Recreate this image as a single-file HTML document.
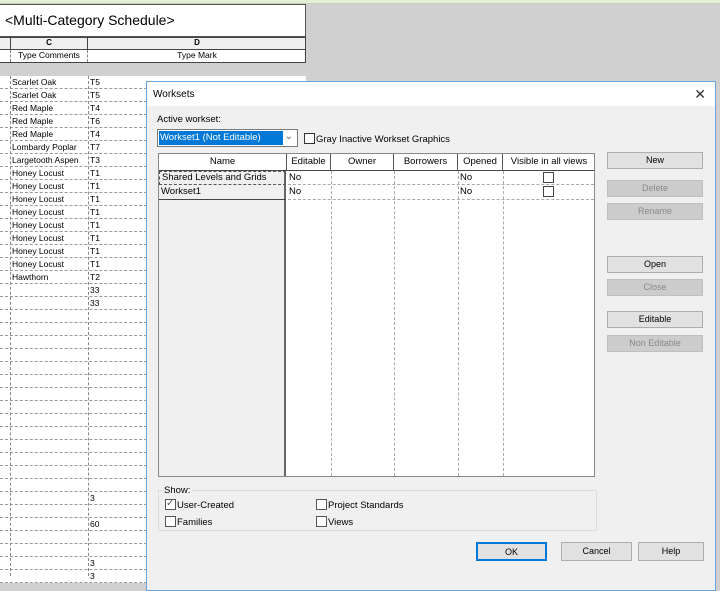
<!DOCTYPE html><html><head><style>
*{margin:0;padding:0;box-sizing:border-box}
body{width:720px;height:576px;overflow:hidden;background:#d0d0d0;font-family:"Liberation Sans",sans-serif;font-size:9px;color:#000;position:relative}
.a{position:absolute}
.row{position:absolute;left:0;width:306px;height:13px;border-bottom:1px dashed #999;background:#fff}
.row span{position:absolute;top:1px;font-size:8.5px}
.btn{position:absolute;left:607px;width:96px;height:17px;border:1px solid #adadad;background:#e1e1e1;text-align:center;line-height:15px;font-size:9px}
.dis{background:#ccc;border-color:#bfbfbf;color:#8a8a8a}
.cb{position:absolute;width:11px;height:11px;border:1px solid #333;background:#fff}
.th{position:absolute;top:0;height:17px;border-right:1px solid #555;text-align:center;line-height:16px;font-size:9.5px}
.vl{position:absolute;top:17px;bottom:0;border-left:1px dashed #aaa}
.dlg{font-size:9.5px}
</style></head><body>
<div class="a" style="left:0;top:0;width:720px;height:4px;background:#e6eed6;border-bottom:1px solid #c8d0b8"></div>
<div class="a" style="left:0;top:4px;width:306px;height:33px;background:#fff;border:1px solid #555;border-left:none;font-size:14px;padding:7px 0 0 5px">&lt;Multi-Category Schedule&gt;</div>
<div class="a" style="left:0;top:37px;width:306px;height:13px;background:#f0f0f0;border:1px solid #444;border-left:none;font-weight:bold;font-size:8px">
<div class="a" style="left:10px;width:78px;border-left:1px solid #444;border-right:1px solid #444;height:11px;text-align:center">C</div>
<div class="a" style="left:88px;width:218px;text-align:center">D</div></div>
<div class="a" style="left:0;top:50px;width:306px;height:13px;background:#fff;border:1px solid #444;border-top:none;border-left:none;font-size:8.5px">
<div class="a" style="left:10px;width:78px;border-left:1px dashed #888;border-right:1px dashed #888;height:12px;text-align:center">Type Comments</div>
<div class="a" style="left:88px;width:218px;text-align:center">Type Mark</div></div>
<div class="a" style="left:0;top:76px;width:306px;height:500px;background:#fff"></div>
<div id="rows"></div>
<div class="a" style="left:10px;top:76px;height:500px;border-left:1px dashed #888"></div>
<div class="a" style="left:88px;top:76px;height:500px;border-left:1px dashed #888"></div>

<div class="a dlg" style="left:146px;top:81px;width:570px;height:510px;background:#f0f0f0;border:1px solid #6aa6dc">
<div class="a" style="left:0;top:0;width:568px;height:24px;background:#fff;font-size:10px;padding:7px 0 0 6px">Worksets<span class="a" style="right:9px;top:4px;font-size:14px;color:#333">✕</span></div>
<div class="a" style="left:10px;top:32px">Active workset:</div>
<div class="a" style="left:10px;top:47px;width:141px;height:18px;background:#fff;border:1px solid #7a7a7a">
<div class="a" style="left:1px;top:1px;width:124px;height:14px;background:#0078d7;color:#fff;padding:1px 1px">Workset1 (Not Editable)</div>
<div class="a" style="right:4px;top:1px;color:#666;font-size:10px">⌄</div></div>
<div class="cb" style="left:157px;top:51px;border-color:#333"></div>
<div class="a" style="left:169px;top:52px">Gray Inactive Workset Graphics</div>
<div class="a" style="left:11px;top:71px;width:437px;height:324px;background:#fff;border:1px solid #888">
<div class="a" style="left:0;top:0;width:127px;height:322px;background:#f0f0f0;border-right:2px solid #666"></div>
<div class="a" style="left:0;top:0;width:435px;height:17px;border-bottom:1px solid #444;background:#fff"></div>
<div class="th" style="left:0;width:128px">Name</div>
<div class="th" style="left:128px;width:44px">Editable</div>
<div class="th" style="left:172px;width:63px">Owner</div>
<div class="th" style="left:235px;width:64px">Borrowers</div>
<div class="th" style="left:299px;width:45px">Opened</div>
<div class="th" style="left:344px;width:92px;border-right:none">Visible in all views</div>
<div class="vl" style="left:172px"></div><div class="vl" style="left:235px"></div><div class="vl" style="left:299px"></div><div class="vl" style="left:344px"></div>
<div class="a" style="left:0;top:17px;width:127px;height:14px;border:1px dashed #555;padding:0 2px">Shared Levels and Grids</div>
<div class="a" style="left:0;top:31px;width:127px;height:15px;border-bottom:1px solid #444;padding:1px 2px">Workset1</div>
<div class="a" style="left:129px;top:17px;width:306px;height:14px;border-bottom:1px dashed #aaa"></div>
<div class="a" style="left:129px;top:31px;width:306px;height:15px;border-bottom:1px dashed #aaa"></div>
<div class="a" style="left:130px;top:18px">No</div><div class="a" style="left:130px;top:32px">No</div>
<div class="a" style="left:301px;top:18px">No</div><div class="a" style="left:301px;top:32px">No</div>
<div class="cb" style="left:384px;top:18px;border-color:#444"></div><div class="cb" style="left:384px;top:32px;border-color:#444"></div>
</div>
<div class="a" style="left:11px;top:408px;width:439px;height:41px;border:1px solid #dcdcdc"></div>
<div class="a" style="left:15px;top:403px;background:#f0f0f0;padding:0 2px">Show:</div>
<div class="cb" style="left:18px;top:417px;border-color:#555;font-size:10px;line-height:8px;color:#555">✓</div>
<div class="a" style="left:30px;top:418px">User-Created</div>
<div class="cb" style="left:18px;top:434px;border-color:#555"></div><div class="a" style="left:30px;top:435px">Families</div>
<div class="cb" style="left:169px;top:417px;border-color:#555"></div><div class="a" style="left:181px;top:418px">Project Standards</div>
<div class="cb" style="left:169px;top:434px;border-color:#555"></div><div class="a" style="left:181px;top:435px">Views</div>
</div>
<div class="btn" style="top:152px">New</div>
<div class="btn dis" style="top:180px">Delete</div>
<div class="btn dis" style="top:203px">Rename</div>
<div class="btn" style="top:256px">Open</div>
<div class="btn dis" style="top:279px">Close</div>
<div class="btn" style="top:311px">Editable</div>
<div class="btn dis" style="top:335px">Non Editable</div>
<div class="btn" style="left:476px;top:542px;width:71px;height:19px;line-height:17px;border:2px solid #0078d7">OK</div>
<div class="btn" style="left:561px;top:542px;width:71px;height:19px;line-height:17px">Cancel</div>
<div class="btn" style="left:638px;top:542px;width:66px;height:19px;line-height:17px">Help</div>
<script>
var d={0:["Scarlet Oak","T5"],1:["Scarlet Oak","T5"],2:["Red Maple","T4"],3:["Red Maple","T6"],4:["Red Maple","T4"],5:["Lombardy Poplar","T7"],6:["Largetooth Aspen","T3"],7:["Honey Locust","T1"],8:["Honey Locust","T1"],9:["Honey Locust","T1"],10:["Honey Locust","T1"],11:["Honey Locust","T1"],12:["Honey Locust","T1"],13:["Honey Locust","T1"],14:["Honey Locust","T1"],15:["Hawthorn","T2"],16:["","33"],17:["","33"],32:["","3"],34:["","60"],37:["","3"],38:["","3"]};
var h="";for(var i=0;i<39;i++){var r=d[i]||["",""];h+='<div class="row" style="top:'+(76+13*i)+'px"><span style="left:12px">'+r[0]+'</span><span style="left:90px">'+r[1]+'</span></div>';}
document.getElementById("rows").innerHTML=h;
</script>
</body></html>
